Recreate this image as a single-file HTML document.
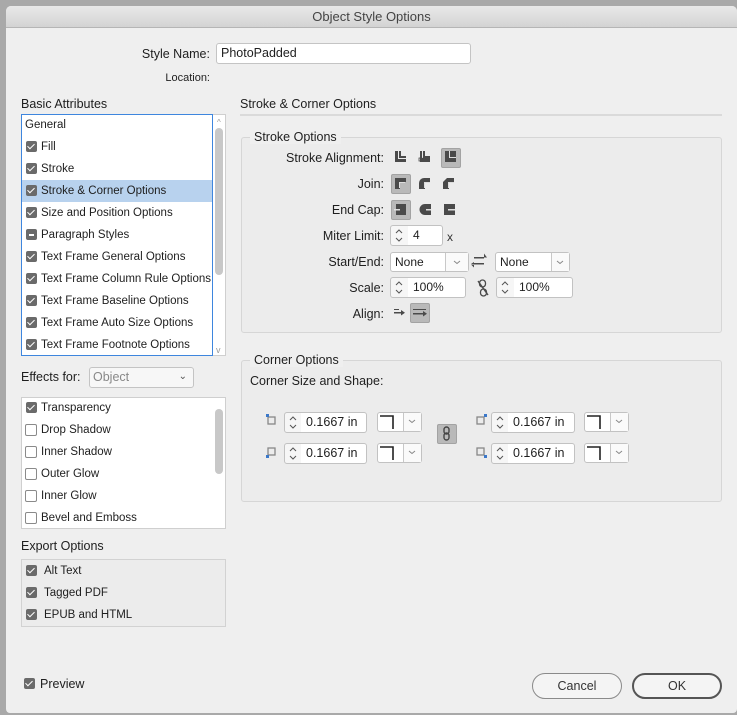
<!DOCTYPE html>
<html><head><meta charset="utf-8"><style>
*{box-sizing:border-box;margin:0;padding:0}
body{width:737px;height:715px;background:#a9a9a9;font-family:"Liberation Sans",sans-serif;font-size:11.5px;color:#1e1e1e;position:relative;overflow:hidden}
.win{position:absolute;left:6px;top:6px;width:731px;height:707px;background:#efefef;border-radius:5px 5px 4px 4px;overflow:hidden}
.title{position:absolute;left:0;top:0;width:100%;height:22px;background:linear-gradient(#e9e9e9,#d3d3d3);border-bottom:1px solid #b5b5b5;text-align:center;line-height:22px;font-size:13px;color:#444}
.a{position:absolute}
.t{position:absolute;white-space:nowrap;line-height:14px}
.r{text-align:right}
.cb{position:absolute;width:11px;height:11px;background:#6a6a6a;border-radius:2px}
.cb:after{content:"";position:absolute;left:3px;top:1px;width:3px;height:6px;border:solid #fff;border-width:0 1.6px 1.6px 0;transform:rotate(45deg)}
.cbe{position:absolute;width:12px;height:12px;background:#fff;border:1px solid #8a8a8a;border-radius:2px}
.box{position:absolute;background:#fff;border:1px solid #c4c4c4}
.grp{position:absolute;border:1px solid #d6d6d6;border-radius:3px;background:#ececec}
.spin{position:absolute;background:#f6f6f6;border:1px solid #c2c2c2;border-radius:3px 0 0 3px}
.inp{position:absolute;background:#fff;border:1px solid #c2c2c2;border-left:none;border-radius:0 3px 3px 0;padding-left:5px;line-height:19px;font-size:12px}
.sel{position:absolute;background:#fff;border:1px solid #c2c2c2;border-radius:3px;padding-left:4px;font-size:12px}
.dd{position:absolute;top:0;right:0;bottom:0;border-left:1px solid #c8c8c8;background:#fafafa}
.btn{position:absolute;background:#b9b9b9;border:1px solid #a3a3a3;border-radius:2px}
</style></head><body>
<div class="win">
<div class="title">Object Style Options</div>
</div>
<!-- absolute coordinates relative to body -->
<div class="t r" style="left:100px;top:47px;width:110px;font-size:12.5px">Style Name:</div>
<div class="a" style="left:216px;top:43px;width:255px;height:21px;background:#fff;border:1px solid #c4c4c4;border-radius:3px;padding-left:4px;line-height:19px;font-size:12.5px">PhotoPadded</div>
<div class="t r" style="left:100px;top:71px;width:110px;font-size:11px">Location:</div>

<div class="t" style="left:21px;top:97px;font-size:12.5px">Basic Attributes</div>
<div class="box" style="left:21px;top:114px;width:205px;height:242px;border-color:#cfcfcf"></div>
<div class="a" style="left:21px;top:114px;width:192px;height:242px;border:1px solid #3e86de;background:#fff"></div>
<div class="a" style="left:22px;top:180px;width:190px;height:22px;background:#b8d2ee"></div>
<div class="a" style="left:215px;top:128px;width:8px;height:147px;background:#c8c8c8;border-radius:4px"></div>
<div class="t" style="left:217px;top:116px;font-size:8px;color:#999">^</div>
<div class="t" style="left:216px;top:343px;font-size:9px;color:#999">v</div>
<div class="t" style="left:25px;top:118px">General</div>
<div class="cb" style="left:26px;top:141px"></div><div class="t" style="left:41px;top:140px">Fill</div>
<div class="cb" style="left:26px;top:163px"></div><div class="t" style="left:41px;top:162px">Stroke</div>
<div class="cb" style="left:26px;top:185px"></div><div class="t" style="left:41px;top:184px">Stroke &amp; Corner Options</div>
<div class="cb" style="left:26px;top:207px"></div><div class="t" style="left:41px;top:206px">Size and Position Options</div>
<div class="a" style="left:26px;top:229px;width:11px;height:11px;background:#6a6a6a;border-radius:2px"><div style="position:absolute;left:3px;top:5px;width:5px;height:1.5px;background:#fff"></div></div><div class="t" style="left:41px;top:228px">Paragraph Styles</div>
<div class="cb" style="left:26px;top:251px"></div><div class="t" style="left:41px;top:250px">Text Frame General Options</div>
<div class="cb" style="left:26px;top:273px"></div><div class="t" style="left:41px;top:272px">Text Frame Column Rule Options</div>
<div class="cb" style="left:26px;top:295px"></div><div class="t" style="left:41px;top:294px">Text Frame Baseline Options</div>
<div class="cb" style="left:26px;top:317px"></div><div class="t" style="left:41px;top:316px">Text Frame Auto Size Options</div>
<div class="cb" style="left:26px;top:339px"></div><div class="t" style="left:41px;top:338px">Text Frame Footnote Options</div>

<div class="t" style="left:21px;top:370px;font-size:12.5px">Effects for:</div>
<div class="a" style="left:89px;top:367px;width:105px;height:21px;background:#f7f7f7;border:1px solid #c4c4c4;border-radius:3px;padding-left:3px;line-height:19px;font-size:12.5px;color:#888">Object<span style="position:absolute;right:6px;top:-1px;color:#555;font-size:10px">&#8964;</span></div>
<div class="box" style="left:21px;top:397px;width:205px;height:132px;border-color:#cfcfcf"></div>
<div class="a" style="left:215px;top:409px;width:8px;height:65px;background:#c8c8c8;border-radius:4px"></div>
<div class="cb" style="left:26px;top:402px"></div><div class="t" style="left:41px;top:401px">Transparency</div>
<div class="cbe" style="left:25px;top:424px"></div><div class="t" style="left:41px;top:423px">Drop Shadow</div>
<div class="cbe" style="left:25px;top:446px"></div><div class="t" style="left:41px;top:445px">Inner Shadow</div>
<div class="cbe" style="left:25px;top:468px"></div><div class="t" style="left:41px;top:467px">Outer Glow</div>
<div class="cbe" style="left:25px;top:490px"></div><div class="t" style="left:41px;top:489px">Inner Glow</div>
<div class="cbe" style="left:25px;top:512px"></div><div class="t" style="left:41px;top:511px">Bevel and Emboss</div>

<div class="t" style="left:21px;top:539px;font-size:12.5px">Export Options</div>
<div class="a" style="left:21px;top:559px;width:205px;height:68px;border:1px solid #d2d2d2;background:#ececec"></div>
<div class="cb" style="left:26px;top:565px"></div><div class="t" style="left:44px;top:564px">Alt Text</div>
<div class="cb" style="left:26px;top:587px"></div><div class="t" style="left:44px;top:586px">Tagged PDF</div>
<div class="cb" style="left:26px;top:609px"></div><div class="t" style="left:44px;top:608px">EPUB and HTML</div>

<div class="t" style="left:240px;top:97px;font-size:12.5px">Stroke &amp; Corner Options</div>
<div class="a" style="left:240px;top:114px;width:482px;height:2px;background:#dadada"></div>

<div class="grp" style="left:241px;top:137px;width:481px;height:196px"></div>
<div class="t" style="left:250px;top:130px;padding:0 4px;background:#efefef;font-size:12.5px">Stroke Options</div>
<div class="t r" style="left:240px;top:151px;width:144px;font-size:12.5px">Stroke Alignment:</div>
<div class="t r" style="left:240px;top:177px;width:144px;font-size:12.5px">Join:</div>
<div class="t r" style="left:240px;top:203px;width:144px;font-size:12.5px">End Cap:</div>
<div class="t r" style="left:240px;top:229px;width:144px;font-size:12.5px">Miter Limit:</div>
<div class="t r" style="left:240px;top:255px;width:144px;font-size:12.5px">Start/End:</div>
<div class="t r" style="left:240px;top:281px;width:144px;font-size:12.5px">Scale:</div>
<div class="t r" style="left:240px;top:307px;width:144px;font-size:12.5px">Align:</div>

<div class="btn" style="left:441px;top:148px;width:20px;height:20px"></div>
<div class="btn" style="left:391px;top:174px;width:20px;height:20px"></div>
<div class="btn" style="left:391px;top:200px;width:20px;height:20px"></div>
<div class="btn" style="left:410px;top:303px;width:20px;height:20px"></div>
<svg class="a" style="left:0;top:0" width="737" height="715" fill="#4a4a4a" stroke="none">
<!-- stroke align -->
<path d="M395 151h3v8h8v3h-11z M399 151h2v5h5v2h-7z"/>
<path d="M420 151h2v7h8v4h-10z M423 151h2v5h5v2h-7z" /><rect x="419" y="158" width="3" height="3" fill="none" stroke="#4a4a4a" stroke-width="0.8"/>
<path d="M445 151h11v11h-11z" /><path d="M449 151h1v6h6v1h-7z" fill="#ddd"/>
<!-- join -->
<path d="M395 178h11v4h-6v7h-5z"/><path d="M399 182h6v1h-5v5h-1z" fill="#ddd"/>
<path d="M419 183a5 5 0 0 1 5 -5h6v4h-5v7h-6z"/><path d="M424 182h6v1h-5v5h-1z" fill="#ddd"/>
<path d="M443 182l4 -4h7v4h-5v7h-6z"/><path d="M448 182h6v1h-5v5h-1z" fill="#ddd"/>
<!-- cap -->
<path d="M396 204h10v11h-10z"/><path d="M394 209h6v1.5h-6z" fill="#ddd"/>
<path d="M425 204h6v11h-6a5.5 5.5 0 0 1 0 -11z"/><path d="M426 209h5v1.5h-5z" fill="#ddd"/>
<path d="M444 204h11v11h-11z"/><path d="M448 209h7v1.5h-7z" fill="#ddd"/>
<!-- miter x -->
<text x="447" y="241" font-family="Liberation Sans" font-size="12" fill="#333">x</text>
<!-- swap -->
<path d="M474 257h10v1.5h-10z M474 263h10v1.5h-10z"/><path d="M484 253.5l3 4h-3z M474 262l-3 2h3z M474 264.5l-3 0l3 3z"/>
<!-- link broken -->
<path d="M478 281l10 14" stroke="#4a4a4a" stroke-width="1.4" fill="none"/><rect x="479.5" y="280" width="6" height="7" rx="3" fill="none" stroke="#4a4a4a" stroke-width="1.3"/><rect x="480.5" y="289" width="6" height="7" rx="3" fill="none" stroke="#4a4a4a" stroke-width="1.3"/>
<!-- align -->
<path d="M394 312h7v1.5h-7z M394 309h5v1h-5z"/><path d="M401 310l4 2.75l-4 2.75z"/>
<path d="M413 313h10v1.5h-10z M413 309h13v1h-13z"/><path d="M423 311l4 2.75l-4 2.75z"/>
</svg>

<div class="spin" style="left:390px;top:225px;width:19px;height:21px"></div>
<div class="inp" style="left:408px;top:225px;width:35px;height:21px">4</div>
<div class="sel" style="left:390px;top:252px;width:79px;height:20px;line-height:18px">None<div class="dd" style="width:23px"></div></div>
<div class="sel" style="left:495px;top:252px;width:75px;height:20px;line-height:18px">None<div class="dd" style="width:18px"></div></div>
<div class="spin" style="left:390px;top:277px;width:19px;height:21px"></div>
<div class="inp" style="left:408px;top:277px;width:58px;height:21px">100%</div>
<div class="spin" style="left:496px;top:277px;width:19px;height:21px"></div>
<div class="inp" style="left:514px;top:277px;width:59px;height:21px">100%</div>

<div class="grp" style="left:241px;top:360px;width:481px;height:142px"></div>
<div class="t" style="left:250px;top:353px;padding:0 4px;background:#efefef;font-size:12.5px">Corner Options</div>
<div class="t" style="left:250px;top:374px;font-size:12.5px">Corner Size and Shape:</div>

<div class="spin" style="left:284px;top:412px;width:18px;height:21px"></div>
<div class="inp" style="left:301px;top:412px;width:66px;height:21px;font-size:12.5px">0.1667 in</div>
<div class="sel" style="left:377px;top:412px;width:45px;height:20px"><div class="dd" style="width:18px"></div></div>
<div class="spin" style="left:284px;top:443px;width:18px;height:21px"></div>
<div class="inp" style="left:301px;top:443px;width:66px;height:21px;font-size:12.5px">0.1667 in</div>
<div class="sel" style="left:377px;top:443px;width:45px;height:20px"><div class="dd" style="width:18px"></div></div>
<div class="spin" style="left:491px;top:412px;width:18px;height:21px"></div>
<div class="inp" style="left:508px;top:412px;width:67px;height:21px;font-size:12.5px">0.1667 in</div>
<div class="sel" style="left:584px;top:412px;width:45px;height:20px"><div class="dd" style="width:18px"></div></div>
<div class="spin" style="left:491px;top:443px;width:18px;height:21px"></div>
<div class="inp" style="left:508px;top:443px;width:67px;height:21px;font-size:12.5px">0.1667 in</div>
<div class="sel" style="left:584px;top:443px;width:45px;height:20px"><div class="dd" style="width:18px"></div></div>
<div class="btn" style="left:437px;top:424px;width:20px;height:20px"></div>

<svg class="a" style="left:0;top:0" width="737" height="715" fill="none" stroke="#666" stroke-width="1">
<!-- spinner arrows -->
<g stroke="#555" stroke-width="1">
<path d="M396 233l3-3l3 3M396 238l3 3l3-3"/>
<path d="M396 285l3-3l3 3M396 290l3 3l3-3"/>
<path d="M502 285l3-3l3 3M502 290l3 3l3-3"/>
<path d="M290 420l3-3l3 3M290 425l3 3l3-3"/>
<path d="M290 451l3-3l3 3M290 456l3 3l3-3"/>
<path d="M497 420l3-3l3 3M497 425l3 3l3-3"/>
<path d="M497 451l3-3l3 3M497 456l3 3l3-3"/>
</g>
<g stroke="#888">
<path d="M454 261l3 2.5l3-2.5M557 261l3 2.5l3-2.5"/>
<path d="M409 420l3 2.5l3-2.5M409 451l3 2.5l3-2.5M616 420l3 2.5l3-2.5M616 451l3 2.5l3-2.5"/>
</g>
<!-- corner shape -->
<g stroke="#222" stroke-width="1.6">
<path d="M380 416h13v13M380 447h13v13M587 416h13v13M587 447h13v13"/>
</g>
<!-- corner icons -->
<g stroke="#888" stroke-width="1.3">
<rect x="268" y="417" width="7" height="7"/><rect x="268" y="448" width="7" height="7"/>
<rect x="477" y="417" width="7" height="7"/><rect x="477" y="448" width="7" height="7"/>
</g>
<g fill="#3b78c9" stroke="none">
<rect x="266" y="414" width="3" height="3"/><rect x="266" y="455" width="3" height="3"/>
<rect x="484" y="414" width="3" height="3"/><rect x="484" y="455" width="3" height="3"/>
</g>
<!-- link -->
<g stroke="#444" stroke-width="1.4"><rect x="444" y="427" width="5" height="7" rx="2.5"/><rect x="444" y="433" width="5" height="7" rx="2.5"/></g>
</svg>

<div class="cb" style="left:24px;top:678px"></div>
<div class="t" style="left:40px;top:677px;font-size:12.5px">Preview</div>
<div class="a" style="left:532px;top:673px;width:90px;height:26px;border:1px solid #8a8a8a;border-radius:13px;background:#f4f4f4;text-align:center;line-height:24px;font-size:12.5px;color:#333">Cancel</div>
<div class="a" style="left:632px;top:673px;width:90px;height:26px;border:2px solid #555;border-radius:13px;background:#f4f4f4;text-align:center;line-height:22px;font-size:12.5px;color:#333">OK</div>
</body></html>
